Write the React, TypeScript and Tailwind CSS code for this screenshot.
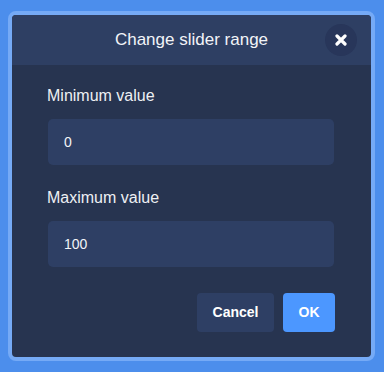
export default function App() {
  return (
    <div
      className="w-[384px] h-[372px] bg-[#4c8eec] pl-[8px] pt-[11px]"
      style={{ fontFamily: '"Liberation Sans", Arial, sans-serif' }}
    >
      <div className="w-[367px] h-[350px] rounded-[8px] border-[4px] border-[#75aaf6] bg-[#273450] overflow-hidden flex flex-col">
        {/* Header */}
        <div className="relative h-[50px] shrink-0 bg-[#2e3f63] flex items-center justify-center">
          <span className="text-[17px] text-[#f2f4f8]">Change slider range</span>
          <button className="absolute right-[14px] top-[9px] w-[32px] h-[32px] rounded-full bg-[#28365a] flex items-center justify-center">
            <svg width="12" height="12" viewBox="0 0 12 12">
              <path d="M2 2 L10 10 M10 2 L2 10" stroke="#ffffff" strokeWidth="3.2" strokeLinecap="round" />
            </svg>
          </button>
        </div>

        {/* Body */}
        <div className="flex flex-col pl-[36px] pr-[37px] pt-[22px]">
          <label className="-ml-[1px] text-[16px] leading-[18px] text-[#eef0f4]">Minimum value</label>
          <div className="mt-[14px] h-[46px] rounded-[5px] bg-[#2e3f64] flex items-center px-[16px] text-[14px] text-[#f2f4f8]">
            0
          </div>
          <label className="-ml-[1px] mt-[24px] text-[16px] leading-[18px] text-[#eef0f4]">Maximum value</label>
          <div className="mt-[14px] h-[46px] rounded-[5px] bg-[#2e3f64] flex items-center px-[16px] text-[14px] text-[#f2f4f8]">
            100
          </div>
          <div className="-mr-[1px] mt-[26px] flex justify-end gap-[9px]">
            <button className="w-[77px] h-[39px] rounded-[4px] bg-[#2e3f64] text-[14px] font-bold text-white">
              Cancel
            </button>
            <button className="w-[52px] h-[39px] rounded-[4px] bg-[#4c97ff] text-[14px] font-bold text-white">
              OK
            </button>
          </div>
        </div>
      </div>
    </div>
  );
}
